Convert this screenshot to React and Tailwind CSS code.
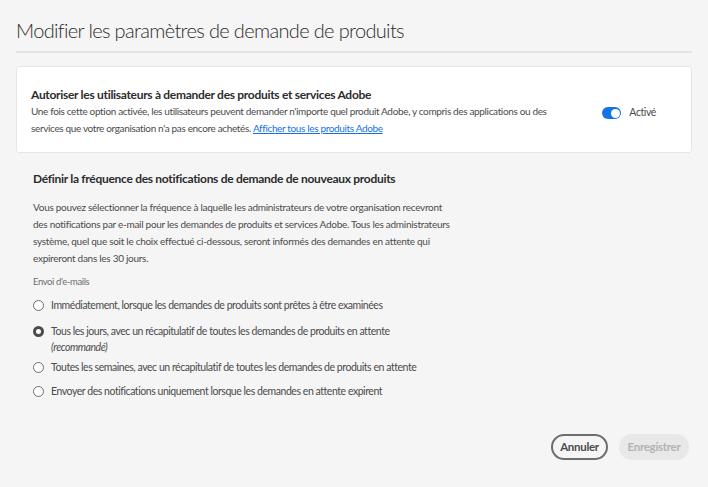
import React, { useState } from 'react';

const font = { fontFamily: 'Lato, "Liberation Sans", Arial, sans-serif' };

const options = [
  { id: 'immediate', gap: 'mt-0', label: 'Immédiatement, lorsque les demandes de produits sont prêtes à être examinées' },
  {
    id: 'daily',
    gap: 'mt-[10px]',
    label: 'Tous les jours, avec un récapitulatif de toutes les demandes de produits en attente',
    note: '(recommandé)',
  },
  { id: 'weekly', gap: 'mt-[4px]', label: 'Toutes les semaines, avec un récapitulatif de toutes les demandes de produits en attente' },
  { id: 'expire', gap: 'mt-[8px]', label: 'Envoyer des notifications uniquement lorsque les demandes en attente expirent' },
];

const Radio = ({ checked }) => (
  <span
    className={
      checked
        ? 'mt-[2.5px] h-[11px] w-[11px] shrink-0 rounded-full border-[3.5px] border-[#4b4b4b] bg-white'
        : 'mt-[2.5px] h-[11px] w-[11px] shrink-0 rounded-full border border-[#6e6e6e] bg-white'
    }
  />
);

const App = () => {
  const [frequency, setFrequency] = useState('daily');
  const [enabled, setEnabled] = useState(true);

  return (
    <div className="min-h-[487px] w-[708px] bg-[#f5f5f5] text-[#2c2c2c]" style={font}>
      <div className="px-4 pt-[17px]">
        <h1 className="text-[20px] font-light leading-[26px] tracking-[-0.65px] text-[#2c2c2c]">
          Modifier les paramètres de demande de produits
        </h1>
        <div className="mt-[8px] h-[2px] bg-[#e3e3e3]" />
      </div>

      <div className="mx-4 mt-[13px] flex items-center rounded-[3px] border border-[#e6e6e6] bg-white pb-[15px] pl-[14px] pr-[35px] pt-[19px]">
        <div className="flex-1">
          <h2 className="text-[12px] font-bold leading-[17px] tracking-[-0.3px] text-[#2c2c2c]">
            Autoriser les utilisateurs à demander des produits et services Adobe
          </h2>
          <p className="whitespace-nowrap text-[10px] leading-[17px] tracking-[-0.35px] text-[#4b4b4b]">
            Une fois cette option activée, les utilisateurs peuvent demander n'importe quel produit Adobe, y compris des
            applications ou des
            <br />
            services que votre organisation n'a pas encore achetés.{' '}
            <a href="#" className="text-[#1473e6] underline">
              Afficher tous les produits Adobe
            </a>
          </p>
        </div>
        <button type="button" onClick={() => setEnabled(!enabled)} className="mt-[3px] flex items-center gap-[8px]">
          <span
            className={
              enabled
                ? 'flex h-[12px] w-[19px] items-center justify-end rounded-full bg-[#1473e6] px-[1.5px]'
                : 'flex h-[12px] w-[19px] items-center justify-start rounded-full bg-[#b3b3b3] px-[1.5px]'
            }
          >
            <span className="h-[9px] w-[9px] rounded-full bg-white" />
          </span>
          <span className="text-[10.5px] tracking-[-0.4px] text-[#4b4b4b]">{enabled ? 'Activé' : 'Désactivé'}</span>
        </button>
      </div>

      <div className="px-[33px] pt-[17px]">
        <h2 className="text-[12px] font-bold leading-[17px] tracking-[-0.3px] text-[#2c2c2c]">
          Définir la fréquence des notifications de demande de nouveaux produits
        </h2>
        <p className="mt-[12px] whitespace-nowrap text-[10px] leading-[17px] tracking-[-0.28px] text-[#4b4b4b]">
          Vous pouvez sélectionner la fréquence à laquelle les administrateurs de votre organisation recevront
          <br />
          des notifications par e-mail pour les demandes de produits et services Adobe. Tous les administrateurs
          <br />
          système, quel que soit le choix effectué ci-dessous, seront informés des demandes en attente qui
          <br />
          expireront dans les 30 jours.
        </p>
        <div className="mt-[8px] text-[9.5px] leading-[14px] tracking-[-0.4px] text-[#6e6e6e]">Envoi d'e-mails</div>

        <div className="mt-[8px] flex flex-col">
          {options.map((opt) => (
            <label
              key={opt.id}
              className={`${opt.gap} flex cursor-pointer items-start gap-[7px]`}
              onClick={() => setFrequency(opt.id)}
            >
              <Radio checked={frequency === opt.id} />
              <span className="text-[10.5px] leading-[16px] tracking-[-0.45px] text-[#4b4b4b]">
                {opt.label}
                {opt.note && <span className="block italic">{opt.note}</span>}
              </span>
            </label>
          ))}
        </div>
      </div>

      <div className="mt-[35px] flex justify-end gap-[11px] pr-[19px]">
        <button
          type="button"
          className="h-[26px] w-[57px] rounded-full border-2 border-[#6e6e6e] text-[11.5px] font-bold tracking-[-0.3px] text-[#4b4b4b]"
        >
          Annuler
        </button>
        <button
          type="button"
          disabled
          className="h-[26px] w-[70px] rounded-full bg-[#e8e8e8] text-[11.5px] font-bold tracking-[-0.3px] text-[#b3b3b3]"
        >
          Enregistrer
        </button>
      </div>
    </div>
  );
};

export default App;
